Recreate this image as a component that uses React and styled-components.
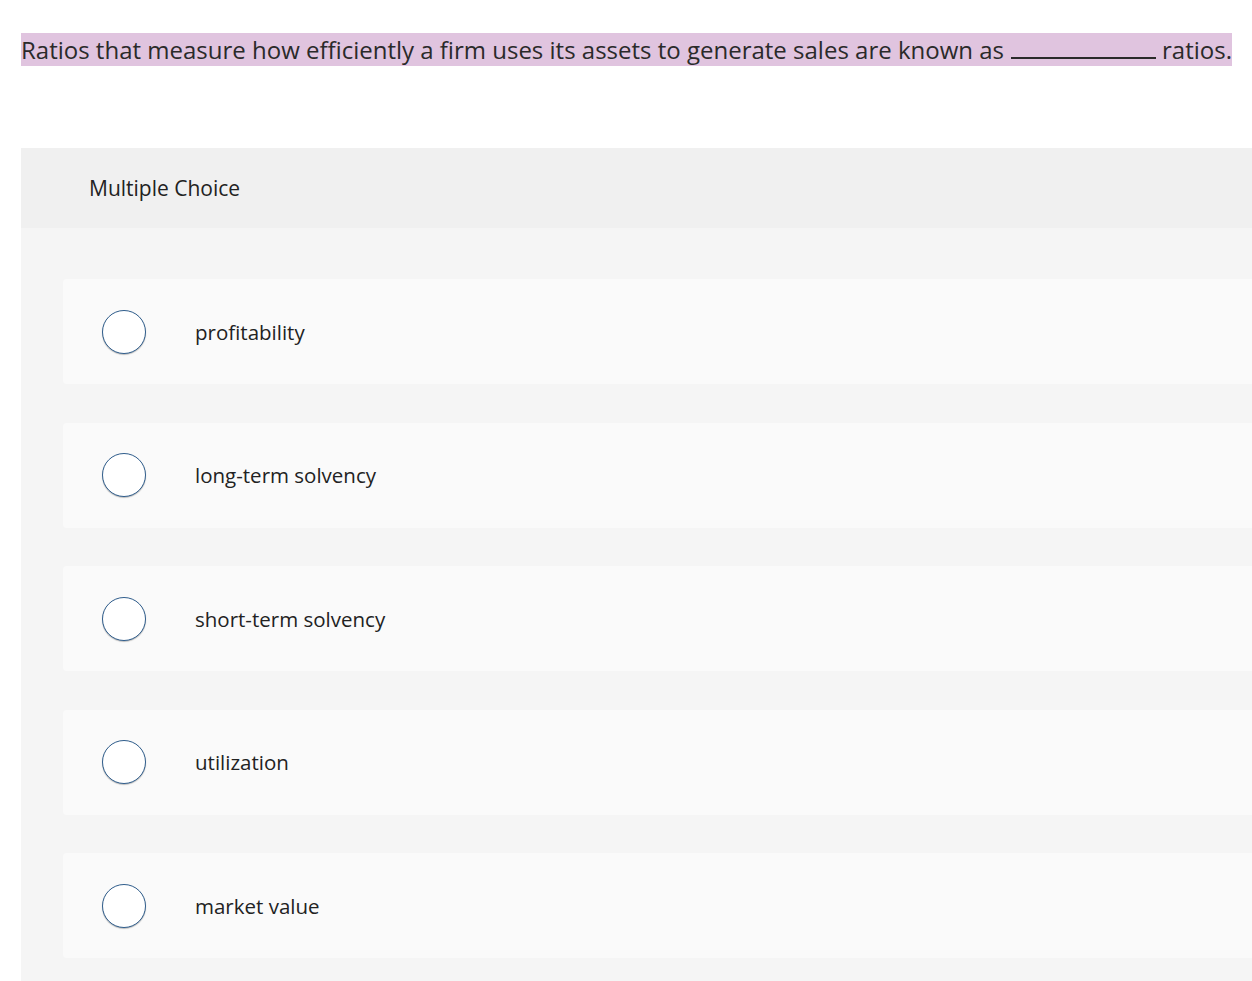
import styled, { createGlobalStyle } from 'styled-components';

const GlobalStyle = createGlobalStyle`
    html, body {
        margin: 0;
        padding: 0;
        background: #ffffff;
        overflow-x: hidden;
    }
    body {
        font-family: 'Open Sans', 'Liberation Sans', sans-serif;
        color: #222222;
    }
`;

const Page = styled.div`
    padding: 32px 0 0 21px;
`;

const Prompt = styled.p`
    margin: 0;
    font-size: 24px;
    line-height: 36px;
    color: #2a2a2a;
    white-space: nowrap;
`;

const Highlight = styled.span`
    background: #e0c4df;
`;

const Blank = styled.span`
    display: inline-block;
    width: 145px;
    border-bottom: 2px solid #2a2a2a;
    margin: 0 6px 0 7px;
`;

const Card = styled.section`
    margin-top: 80px;
    width: calc(100% + 40px);
    background: #f5f5f5;
`;

const CardHeader = styled.header`
    height: 80px;
    display: flex;
    align-items: center;
    padding-left: 68px;
    background: #f0f0f0;
    font-size: 21px;
    color: #222222;
`;

const Options = styled.div`
    display: flex;
    flex-direction: column;
    gap: 38.5px;
    padding: 51px 0 24px 42px;
`;

const Option = styled.label`
    display: flex;
    align-items: center;
    height: 105px;
    padding-left: 39px;
    background: #fafafa;
    border-radius: 4px;
    font-size: 20.5px;
    color: #222222;
    cursor: pointer;
`;

const Radio = styled.span`
    width: 42px;
    height: 42px;
    flex: none;
    border: 1.5px solid #2f5d8c;
    border-radius: 50%;
    background: #ffffff;
    box-shadow: 0 1px 1px rgba(0, 0, 0, 0.25);
    margin-right: 49px;
`;

const choices = [
    'profitability',
    'long-term solvency',
    'short-term solvency',
    'utilization',
    'market value',
];

export default function App() {
    return (
        <>
            <GlobalStyle />
            <Page>
                <Prompt>
                    <Highlight>
                        Ratios that measure how efficiently a firm uses its assets to generate sales are known as
                        <Blank />
                        ratios.
                    </Highlight>
                </Prompt>
                <Card>
                    <CardHeader>Multiple Choice</CardHeader>
                    <Options>
                        {choices.map((c) => (
                            <Option key={c}>
                                <Radio />
                                {c}
                            </Option>
                        ))}
                    </Options>
                </Card>
            </Page>
        </>
    );
}
